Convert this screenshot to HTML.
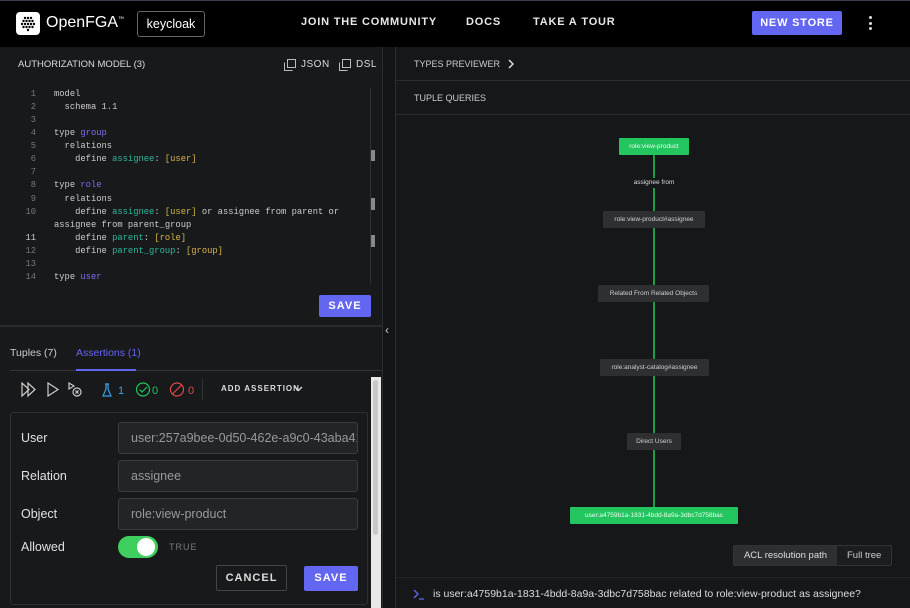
<!DOCTYPE html>
<html><head><meta charset="utf-8"><style>
*{box-sizing:border-box;margin:0;padding:0}
body{width:910px;height:608px;background:#161719;font-family:"Liberation Sans",sans-serif;color:#ddd;position:relative;overflow:hidden}
.a{position:absolute}
.mono{font-family:"Liberation Mono",monospace;font-size:8.8px}
.top{left:0;top:0;width:910px;height:47px;background:#000;border-top:1px solid #3a3d4a}
.nav{font-size:11px;font-weight:bold;letter-spacing:.8px;color:#e8e8e8;top:16px}
.ln{color:#777;width:36px;text-align:right;left:0}
.cd{left:54px;color:#ccc;white-space:pre}
.k{color:#7b6ff0}.g{color:#2fb89a}.y{color:#d8b24c}
.node{background:#2e2f31;color:#cfcfcf;font-size:6.5px;text-align:center;line-height:17px;height:17px;border-radius:1px}
.gn{background:#22c55e;color:#eafff0}
.inp{left:118px;width:240px;height:32px;background:#232426;border:1px solid #3b3c3f;border-radius:3px;color:#999;font-size:12.5px;padding:8px 12px;white-space:nowrap;overflow:hidden}
.lab{left:21px;font-size:12.5px;color:#e0e0e0}
</style></head><body>
<div class="a top"></div>
<div class="a" style="left:16px;top:12px;width:24px;height:23px;background:#fff;border-radius:4px"></div>
<svg class="a" style="left:19px;top:15px" width="18" height="17" viewBox="0 0 18 17"><g fill="#000"><circle cx="6" cy="3" r="1.2"/><circle cx="9" cy="3" r="1.2"/><circle cx="12" cy="3" r="1.2"/><circle cx="4.5" cy="6" r="1.2"/><circle cx="7.5" cy="6" r="1.2"/><circle cx="10.5" cy="6" r="1.2"/><circle cx="13.5" cy="6" r="1.2"/><circle cx="3" cy="9" r="1.2"/><circle cx="6" cy="9" r="1.2"/><circle cx="9" cy="9" r="1.2"/><circle cx="12" cy="9" r="1.2"/><circle cx="15" cy="9" r="1.2"/><circle cx="4.5" cy="12" r="1.2"/><circle cx="7.5" cy="12" r="1.2"/><circle cx="10.5" cy="12" r="1.2"/><circle cx="13.5" cy="12" r="1.2"/><circle cx="9" cy="15" r="1.2"/></g></svg>
<div class="a" style="left:46px;top:14px;font-size:16px;color:#fff">OpenFGA<sup style="font-size:6px">™</sup></div>
<div class="a" style="left:137px;top:11px;width:68px;height:26px;border:1px solid #666;border-radius:3px;font-size:12.5px;color:#fff;text-align:center;line-height:24px">keycloak</div>
<div class="a nav" style="left:301px">JOIN&nbsp;THE COMMUNITY</div>
<div class="a nav" style="left:466px">DOCS</div>
<div class="a nav" style="left:533px">TAKE A&nbsp;TOUR</div>
<div class="a" style="left:752px;top:11px;width:90px;height:24px;background:#6366f1;border-radius:2px;color:#fff;font-size:11px;font-weight:bold;letter-spacing:.8px;text-align:center;line-height:24px">NEW STORE</div>
<div class="a" style="left:869px;top:16px;width:4px;font-size:0"><div style="width:3px;height:3px;background:#ddd;border-radius:2px;margin-bottom:2.5px"></div><div style="width:3px;height:3px;background:#ddd;border-radius:2px;margin-bottom:2.5px"></div><div style="width:3px;height:3px;background:#ddd;border-radius:2px"></div></div>

<div class="a" style="left:0;top:47px;width:382px;height:561px;background:#18191b"></div>
<div class="a" style="left:382px;top:47px;width:14px;height:561px;background:#131416;border-left:1px solid #2c2d30;border-right:1px solid #2c2d30"></div>
<div class="a" style="left:385px;top:323px;font-size:12px;color:#ccc">‹</div>
<div class="a" style="left:18px;top:59px;font-size:9.5px;color:#ddd">AUTHORIZATION MODEL (3)</div>
<svg class="a" style="left:284px;top:59px" width="12" height="12" fill="none" stroke="#bbb"><rect x="3.5" y="0.5" width="8" height="8"/><path d="M0.5 3.5v8h8"/></svg>
<div class="a" style="left:301px;top:59px;font-size:10px;color:#ddd;letter-spacing:.5px">JSON</div>
<svg class="a" style="left:339px;top:59px" width="12" height="12" fill="none" stroke="#bbb"><rect x="3.5" y="0.5" width="8" height="8"/><path d="M0.5 3.5v8h8"/></svg>
<div class="a" style="left:356px;top:59px;font-size:10px;color:#ddd;letter-spacing:.5px">DSL</div>
<div class="a" style="left:370px;top:88px;width:1px;height:197px;background:#2e2f32"></div>
<div class="a" style="left:371px;top:150px;width:4px;height:11px;background:#888"></div>
<div class="a" style="left:371px;top:198px;width:4px;height:12px;background:#888"></div>
<div class="a" style="left:371px;top:235px;width:4px;height:12px;background:#888"></div>
<div class="a mono" style="left:0;top:88px;width:370px;line-height:13.07px">
<div style="position:relative;height:200px">
<div class="a ln" style="top:0">1<br>2<br>3<br>4<br>5<br>6<br>7<br>8<br>9<br>10<br><br><span style="color:#ccc">11</span><br>12<br>13<br>14</div>
<div class="a cd" style="top:0">model
  schema 1.1

type <span class="k">group</span>
  relations
    define <span class="g">assignee</span>: <span class="y">[user]</span>

type <span class="k">role</span>
  relations
    define <span class="g">assignee</span>: <span class="y">[user]</span> or assignee from parent or
assignee from parent_group
    define <span class="g">parent</span>: <span class="y">[role]</span>
    define <span class="g">parent_group</span>: <span class="y">[group]</span>

type <span class="k">user</span></div>
</div></div>
<div class="a" style="left:319px;top:295px;width:52px;height:22px;background:#6366f1;border-radius:2px;color:#fff;font-size:11px;font-weight:bold;letter-spacing:1px;text-align:center;line-height:22px">SAVE</div>
<div class="a" style="left:0;top:325px;width:382px;height:2px;background:#2a2b2e"></div>
<div class="a" style="left:10px;top:347px;font-size:10.5px;color:#ccc">Tuples (7)</div>
<div class="a" style="left:76px;top:347px;font-size:10.5px;color:#6366f1">Assertions (1)</div>
<div class="a" style="left:10px;top:370px;width:372px;height:1px;background:#333"></div>
<div class="a" style="left:76px;top:369px;width:60px;height:2px;background:#6366f1"></div>
<svg class="a" style="left:20px;top:381px" width="180" height="18" viewBox="0 0 180 18" fill="none" stroke-width="1.2">
<path d="M2 2v13l7-6.5zM8 2v13l7-6.5z" stroke="#ccc"/>
<path d="M28 2v13l10-6.5z" stroke="#ccc"/>
<path d="M49 2v6l5-3z" stroke="#ccc"/><circle cx="57" cy="11" r="4" stroke="#ccc"/><path d="M55.5 9.5l3 3m0-3l-3 3" stroke="#ccc"/>
<path d="M85 3h4M86 3v5l-3 7h8l-3-7V3" stroke="#3b9fe8"/>
<circle cx="123" cy="8.5" r="6.5" stroke="#22c55e"/><path d="M119.5 8.5l2.5 2.5 5-5" stroke="#22c55e"/>
<circle cx="157" cy="8.5" r="6.5" stroke="#e04848"/><path d="M152.5 13l9-9" stroke="#e04848"/>
</svg>
<div class="a" style="left:118px;top:385px;font-size:11px;color:#3b9fe8">1</div>
<div class="a" style="left:152px;top:385px;font-size:11px;color:#22c55e">0</div>
<div class="a" style="left:188px;top:385px;font-size:11px;color:#e04848">0</div>
<div class="a" style="left:202px;top:378px;width:1px;height:22px;background:#333"></div>
<div class="a" style="left:221px;top:384px;font-size:8px;font-weight:bold;letter-spacing:1px;color:#ddd">ADD ASSERTION</div>
<svg class="a" style="left:294px;top:386px" width="9" height="6" fill="none" stroke="#ddd" stroke-width="1.3"><path d="M1 1l3.5 3.5L8 1"/></svg>
<div class="a" style="left:371px;top:377px;width:10px;height:231px;background:#e8e8e8"></div>
<div class="a" style="left:373px;top:380px;width:5px;height:155px;background:#c8c8c8;border-radius:3px"></div>
<div class="a" style="left:10px;top:412px;width:358px;height:193px;border:1px solid #2f3033;border-radius:3px;background:#18191b"></div>
<div class="a lab" style="top:431px">User</div><div class="a inp" style="top:422px">user:257a9bee-0d50-462e-a9c0-43aba41</div>
<div class="a lab" style="top:469px">Relation</div><div class="a inp" style="top:460px">assignee</div>
<div class="a lab" style="top:507px">Object</div><div class="a inp" style="top:498px">role:view-product</div>
<div class="a lab" style="top:540px">Allowed</div>
<div class="a" style="left:118px;top:536px;width:40px;height:22px;background:#3ecf5f;border-radius:11px"></div>
<div class="a" style="left:137px;top:538px;width:18px;height:18px;background:#fff;border-radius:9px"></div>
<div class="a" style="left:169px;top:542px;font-size:9px;color:#777;letter-spacing:1px">TRUE</div>
<div class="a" style="left:216px;top:565px;width:71px;height:26px;border:1px solid #444;border-radius:2px;color:#ddd;font-size:11px;font-weight:bold;letter-spacing:1px;text-align:center;line-height:24px">CANCEL</div>
<div class="a" style="left:304px;top:566px;width:54px;height:25px;background:#6366f1;border-radius:2px;color:#fff;font-size:11px;font-weight:bold;letter-spacing:1px;text-align:center;line-height:25px">SAVE</div>

<div class="a" style="left:414px;top:59px;font-size:9px;color:#ccc">TYPES PREVIEWER</div>
<svg class="a" style="left:508px;top:59px" width="6" height="10" fill="none" stroke="#ddd" stroke-width="1.5"><path d="M1 1l4 4-4 4"/></svg>
<div class="a" style="left:396px;top:80px;width:514px;height:1px;background:#2a2b2e"></div>
<div class="a" style="left:414px;top:93px;font-size:9px;color:#ccc">TUPLE QUERIES</div>
<div class="a" style="left:396px;top:114px;width:514px;height:1px;background:#2a2b2e"></div>
<div class="a" style="left:653px;top:154px;width:2px;height:353px;background:#1e9a48"></div>
<div class="a node gn" style="left:619px;top:138px;width:70px">role:view-product</div>
<div class="a" style="left:630px;top:178px;width:48px;font-size:6.5px;color:#ddd;background:#161719;text-align:center;line-height:10px">assignee from</div>
<div class="a node" style="left:603px;top:211px;width:102px">role:view-product#assignee</div>
<div class="a node" style="left:598px;top:285px;width:111px">Related From Related Objects</div>
<div class="a node" style="left:600px;top:359px;width:109px">role:analyst-catalog#assignee</div>
<div class="a node" style="left:627px;top:433px;width:54px">Direct Users</div>
<div class="a node gn" style="left:570px;top:507px;width:168px">user:a4759b1a-1831-4bdd-8a9a-3dbc7d758bac</div>
<div class="a" style="left:733px;top:545px;width:159px;height:21px;border:1px solid #333;border-radius:2px;background:#1c1d1f"></div>
<div class="a" style="left:734px;top:546px;width:103px;height:19px;background:#2e2f31;font-size:9.5px;color:#ddd;text-align:center;line-height:19px">ACL resolution path</div>
<div class="a" style="left:847px;top:550px;font-size:9.5px;color:#ccc">Full tree</div>
<div class="a" style="left:396px;top:577px;width:514px;height:1px;background:#222"></div>
<svg class="a" style="left:413px;top:589px" width="12" height="11" fill="none" stroke="#6366f1" stroke-width="1.3"><path d="M1 1l4 4-4 4M6 10h5"/></svg>
<div class="a" style="left:433px;top:588px;font-size:10.5px;color:#ddd">is user:a4759b1a-1831-4bdd-8a9a-3dbc7d758bac related to role:view-product as assignee?</div>
</body></html>
